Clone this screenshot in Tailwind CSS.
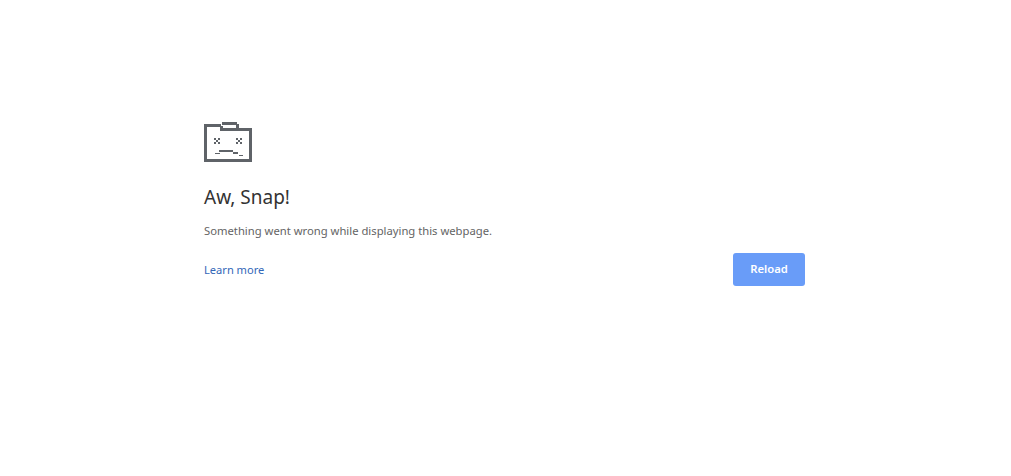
<!DOCTYPE html>
<html>
  <head>
    <meta charset="utf-8" />
    <title>Aw, Snap!</title>
    <script src="https://cdn.jsdelivr.net/npm/@tailwindcss/browser@4"></script>
  </head>
  <body class="bg-white font-['Noto_Sans',sans-serif]">
    <div class="w-[1011px] h-[476px] pt-[122px] pl-[204px] overflow-hidden">
      <div class="w-[601px]">
        <svg class="block" width="48" height="40" viewBox="0 0 48 40" shape-rendering="crispEdges" fill="#5f6368">
          <!-- sad tab -->
          <rect x="0" y="2" width="3" height="38" />
          <rect x="3" y="2" width="14" height="3" />
          <rect x="16" y="4" width="3" height="5" />
          <rect x="18" y="0" width="15" height="3" />
          <rect x="32" y="2" width="3" height="5" />
          <rect x="19" y="6" width="29" height="3" />
          <rect x="45" y="6" width="3" height="34" />
          <rect x="0" y="37" width="48" height="3" />
          <rect x="10" y="16" width="2" height="2" />
          <rect x="14" y="16" width="2" height="2" />
          <rect x="12" y="18" width="2" height="2" />
          <rect x="10" y="20" width="2" height="2" />
          <rect x="14" y="20" width="2" height="2" />
          <rect x="32" y="16" width="2" height="2" />
          <rect x="36" y="16" width="2" height="2" />
          <rect x="34" y="18" width="2" height="2" />
          <rect x="32" y="20" width="2" height="2" />
          <rect x="36" y="20" width="2" height="2" />
          <rect x="11" y="31" width="5" height="1" />
          <rect x="15" y="28" width="14" height="2" />
          <rect x="29" y="30" width="5" height="2" />
          <rect x="35" y="33" width="4" height="1" />
        </svg>
        <h1 class="mt-[21px] text-[19px] leading-[28px] font-normal text-[#333333]">Aw, Snap!</h1>
        <p class="mt-[10px] text-[11.25px] leading-[20px] text-[#646464]">Something went wrong while displaying this webpage.</p>
        <div class="mt-[12px] flex items-center justify-between">
          <a class="mt-[2px] text-[11.1px] text-[#3367b8]">Learn more</a>
          <button class="w-[72px] h-[33px] rounded-[3px] bg-[#699cf8] text-[11.25px] font-semibold text-white">Reload</button>
        </div>
      </div>
    </div>
  </body>
</html>
